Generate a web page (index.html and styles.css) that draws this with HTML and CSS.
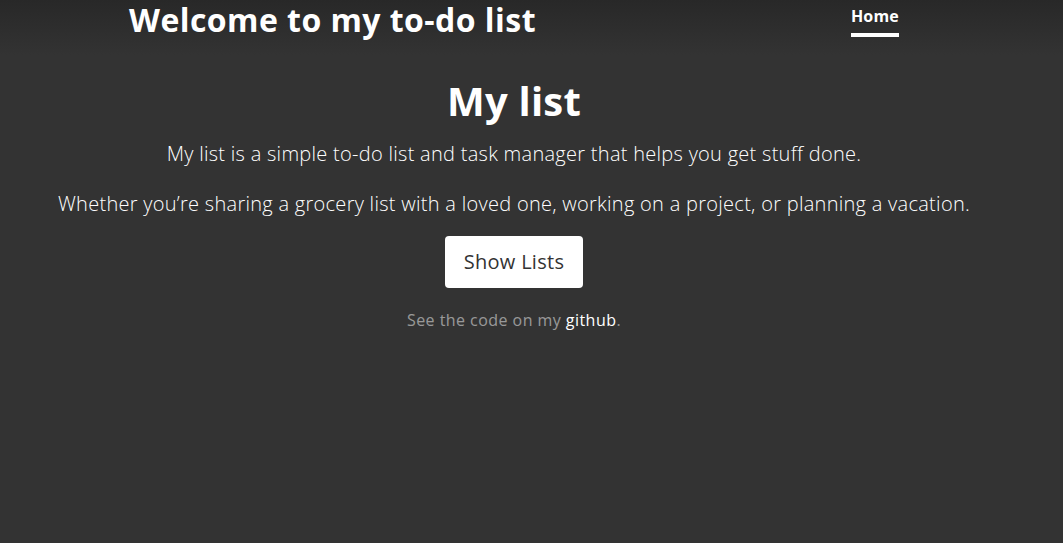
FILE: index.html
```html
<!DOCTYPE html>
<html lang="en">
<head>
<meta charset="utf-8">
<title>My list</title>
<link rel="stylesheet" href="styles.css">
</head>
<body>
<div class="cover">
  <header class="masthead">
    <h3 class="brand">Welcome to my to-do list</h3>
    <nav class="nav">
      <a class="nav-link active" href="#">Home</a>
    </nav>
  </header>
  <main class="inner">
    <h1 class="title">My list</h1>
    <p class="lead">My list is a simple to-do list and task manager that helps you get stuff done.</p>
    <p class="lead">Whether you’re sharing a grocery list with a loved one, working on a project, or planning a vacation.</p>
    <a class="btn" href="#">Show Lists</a>
    <p class="note">See the code on my <a href="#">github</a>.</p>
  </main>
</div>
</body>
</html>
```
FILE: styles.css
```css
html, body {
  margin: 0;
  height: 100%;
}
body {
  background: #333 linear-gradient(#282828 0, #333 55px) no-repeat;
  color: #fff;
  font-family: "Open Sans", "Noto Sans", sans-serif;
}
.cover {
  width: 1028px;
  display: flex;
  flex-direction: column;
  align-items: center;
}
.masthead {
  width: 770px;
  display: flex;
  justify-content: space-between;
  align-items: flex-start;
}
.brand {
  margin: 0;
  font-size: 32px;
  font-weight: 700;
  line-height: 40px;
  letter-spacing: 0.45px;
}
.nav {
  display: flex;
  padding-top: 3px;
}
.nav-link {
  color: #fff;
  text-decoration: none;
  font-weight: 700;
  font-size: 16px;
  line-height: 24px;
  border-bottom: 4px solid #fff;
  padding: 1px 0 5px;
  letter-spacing: 0.2px;
}
.inner {
  display: flex;
  flex-direction: column;
  align-items: center;
  padding-top: 37px;
}
.title {
  margin: 0 0 14px;
  font-size: 40px;
  font-weight: 700;
  line-height: 48px;
  letter-spacing: 0.2px;
}
.lead {
  margin: 0 0 20px;
  font-size: 20px;
  font-weight: 300;
  line-height: 30px;
  letter-spacing: 0.28px;
}
.btn {
  display: block;
  margin-top: -3px;
  width: 138px;
  box-sizing: border-box;
  text-align: center;
  background: #fff;
  color: #333;
  border-radius: 4px;
  text-decoration: none;
  font-size: 20px;
  font-weight: 400;
  line-height: 52px;
  letter-spacing: 0.3px;
}
.note {
  margin: 20px 0 0;
  font-size: 16px;
  line-height: 24px;
  font-weight: 400;
  color: rgba(255, 255, 255, 0.5);
  letter-spacing: 0.45px;
}
.note a {
  color: #fff;
  text-decoration: none;
}
```
